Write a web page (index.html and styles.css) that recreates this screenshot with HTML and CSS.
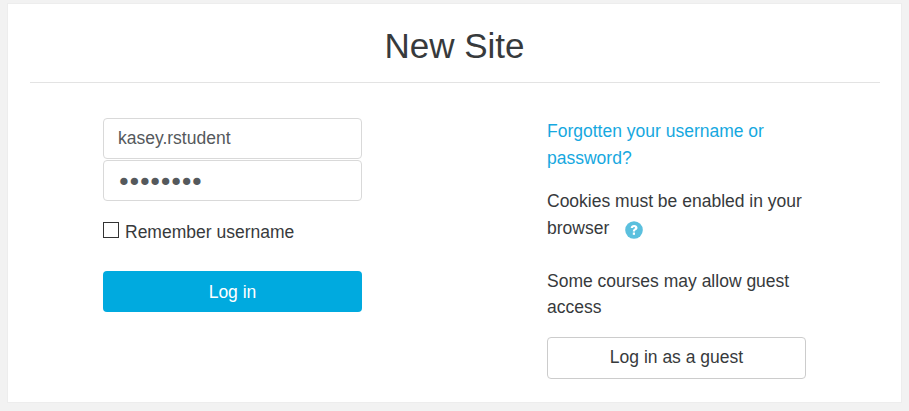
FILE: index.html
```html
<!DOCTYPE html>
<html lang="en">
<head>
    <meta charset="UTF-8">
    <meta name="viewport" content="width=device-width, initial-scale=1.0">
    <title>New Site: Log in to the site</title>
    <link rel="stylesheet" href="styles.css">
</head>
<body>

    <div class="card">
        <h2 class="site-name">New Site</h2>

        <div class="panels">
            <form class="login-panel">
                <input class="field" type="text" value="kasey.rstudent">
                <input class="field field-password" type="password" value="password">
                <label class="remember">
                    <span class="checkbox"></span>
                    Remember username
                </label>
                <button class="btn btn-primary" type="button">Log in</button>
            </form>

            <div class="info-panel">
                <p class="forgot"><a href="#">Forgotten your username or password?</a></p>
                <p class="cookies">Cookies must be enabled in your browser
                    <svg class="help-icon" viewBox="0 0 18 18" width="18" height="18">
                        <circle cx="9" cy="9" r="8.8" fill="#5bc0de"/>
                        <path d="M5.7 6.9C5.8 5 7.2 3.9 9.1 3.9c2 0 3.4 1.1 3.4 2.8 0 1.2-.7 1.8-1.5 2.3-.8.5-1 .8-1 1.6H7.8c0-1.4.4-2 1.3-2.6.7-.5 1-.8 1-1.2 0-.5-.4-.8-1-.8-.7 0-1.1.4-1.2 1.1z" fill="#fff"/>
                        <rect x="7.8" y="11.5" width="2.2" height="2.3" fill="#fff"/>
                    </svg>
                </p>
                <p class="guest-note">Some courses may allow guest access</p>
                <button class="btn btn-secondary" type="button">Log in as a guest</button>
            </div>
        </div>
    </div>

</body>
</html>
```
FILE: styles.css
```css
html, body {
    height: 100%;
}
body {
    margin: 0;
    padding: 3px 7px 8px;
    box-sizing: border-box;
    background-color: #f2f2f2;
    font-family: "Liberation Sans", Arial, sans-serif;
    font-size: 17.5px;
    color: #373a3c;
    overflow: hidden;
}
.card {
    height: 400px;
    box-sizing: border-box;
    padding: 0 21px 0 22px;
    background-color: white;
    border: 1px solid #ededed;
}
.site-name {
    margin: 0;
    height: 79px;
    padding: 19px 1px 0 0;
    box-sizing: border-box;
    border-bottom: 1px solid #e3e3e3;
    text-align: center;
    font-size: 35px;
    line-height: 46px;
    font-weight: normal;
}
.panels {
    display: flex;
    gap: 185px;
    padding: 35px 0 0 73px;
}
.login-panel, .info-panel {
    width: 259px;
}
.field {
    display: block;
    width: 100%;
    height: 41px;
    box-sizing: border-box;
    margin-bottom: 1px;
    padding: 0 14px;
    font-family: inherit;
    font-size: 17.5px;
    color: #55595c;
    background-color: white;
    border: 1px solid #d9d9d9;
    border-radius: 4px;
}
.field-password {
    padding: 3px 0 0 12.5px;
    font-family: "DejaVu Sans", sans-serif;
    font-size: 25px;
    letter-spacing: -4.3px;
}
.remember {
    display: flex;
    align-items: center;
    gap: 6px;
    margin: 21px 0 29px;
    line-height: 20px;
}
.checkbox {
    width: 14px;
    height: 14px;
    border: 1px solid #333;
    margin-top: -4px;
}
.btn {
    display: block;
    width: 100%;
    height: 41px;
    font-family: inherit;
    font-size: 17.5px;
    border-radius: 4px;
    cursor: pointer;
}
.btn-primary {
    padding-top: 3px;
    color: white;
    background-color: #00aadf;
    border: none;
}
.btn-secondary {
    color: #373a3c;
    background-color: white;
    border: 1px solid #cccccc;
    height: 42px;
}
.info-panel p {
    margin: 0;
    line-height: 26.6px;
}
.info-panel a {
    color: #16a8e0;
    text-decoration: none;
}
.cookies {
    padding-top: 17px;
}
.guest-note {
    padding-top: 26.4px;
    padding-bottom: 15.6px;
}
.help-icon {
    vertical-align: -5px;
    margin-left: 11px;
}
```
